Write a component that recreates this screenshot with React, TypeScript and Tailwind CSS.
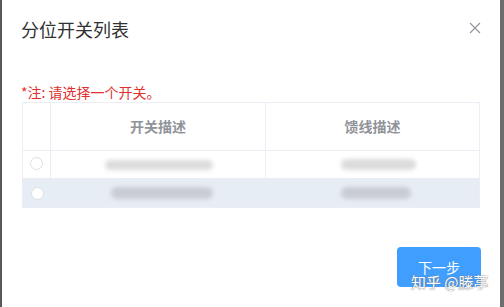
import React from "react";

const font = { fontFamily: '"Noto Sans CJK SC", "Noto Sans", sans-serif' };

function Blob({ w, h, dark }: { w: number; h: number; dark?: boolean }) {
  return (
    <div
      className={`rounded-full blur-[2px] ${dark ? "bg-[#c9ccd3]" : "bg-[#dcdcdc]"}`}
      style={{ width: w, height: h }}
    />
  );
}

export default function App() {
  return (
    <div className="w-[504px] h-[307px] bg-white flex overflow-hidden" style={font}>
      <div className="w-[2px] bg-[#5a5a5a]" />
      <div className="flex-1 relative flex flex-col">
        <div className="flex items-center justify-between pl-[19px] pr-[19px] pt-[16px] h-[42px]">
          <span className="text-[18px] leading-[24px] text-[#303133]">分位开关列表</span>
          <svg width="12" height="12" viewBox="0 0 12 12" className="mt-[-3px]">
            <path d="M1 1 L11 11 M11 1 L1 11" stroke="#909399" strokeWidth="1.1" />
          </svg>
        </div>
        <div className="pl-[19px] mt-[41px] text-[14px] leading-[18px] text-[#e0312d]">*注: 请选择一个开关。</div>
        <div className="ml-[20px] w-[458px] border border-[#ebeef5] mt-[1px]">
          <div className="flex h-[48px] border-b border-[#ebeef5]">
            <div className="w-[28px] border-r border-[#ebeef5]" />
            <div className="w-[215px] border-r border-[#ebeef5] flex items-center justify-center text-[14px] font-bold text-[#909399]">开关描述</div>
            <div className="flex-1 flex items-center justify-center text-[14px] font-bold text-[#909399]">馈线描述</div>
          </div>
          <div className="flex h-[28px] border-b border-[#ebeef5]">
            <div className="w-[28px] border-r border-[#ebeef5] flex items-center justify-center">
              <div className="w-[13px] h-[13px] rounded-full border border-[#dcdfe6] bg-white mt-[-3px]" />
            </div>
            <div className="w-[215px] border-r border-[#ebeef5] flex items-center pl-[54px]">
              <Blob w={108} h={10} />
            </div>
            <div className="flex-1 flex items-center pl-[75px]">
              <Blob w={75} h={11} />
            </div>
          </div>
          <div className="flex h-[28px] bg-[#e7edf5]">
            <div className="w-[28px] flex items-center justify-center">
              <div className="w-[13px] h-[13px] rounded-full border border-[#dcdfe6] bg-white" />
            </div>
            <div className="w-[215px] flex items-center pl-[60px]">
              <Blob w={102} h={12} dark />
            </div>
            <div className="flex-1 flex items-center pl-[75px]">
              <Blob w={70} h={12} dark />
            </div>
          </div>
        </div>
        <div className="flex-1" />
        <div className="flex justify-end pr-[19px] pb-[20px]">
          <div className="w-[84px] h-[40px] rounded-[4px] bg-[#409eff] text-white text-[14px] flex items-center justify-center">下一步</div>
        </div>
        <div
          className="absolute left-[409px] top-[272px] text-[15px] leading-[20px] text-white"
          style={{ textShadow: "0 0 1px #777, 0 0 1px #777" }}
        >
          知乎 @滕葶
        </div>
      </div>
      <div className="w-[4px] bg-[#6e6e6e]" />
    </div>
  );
}
